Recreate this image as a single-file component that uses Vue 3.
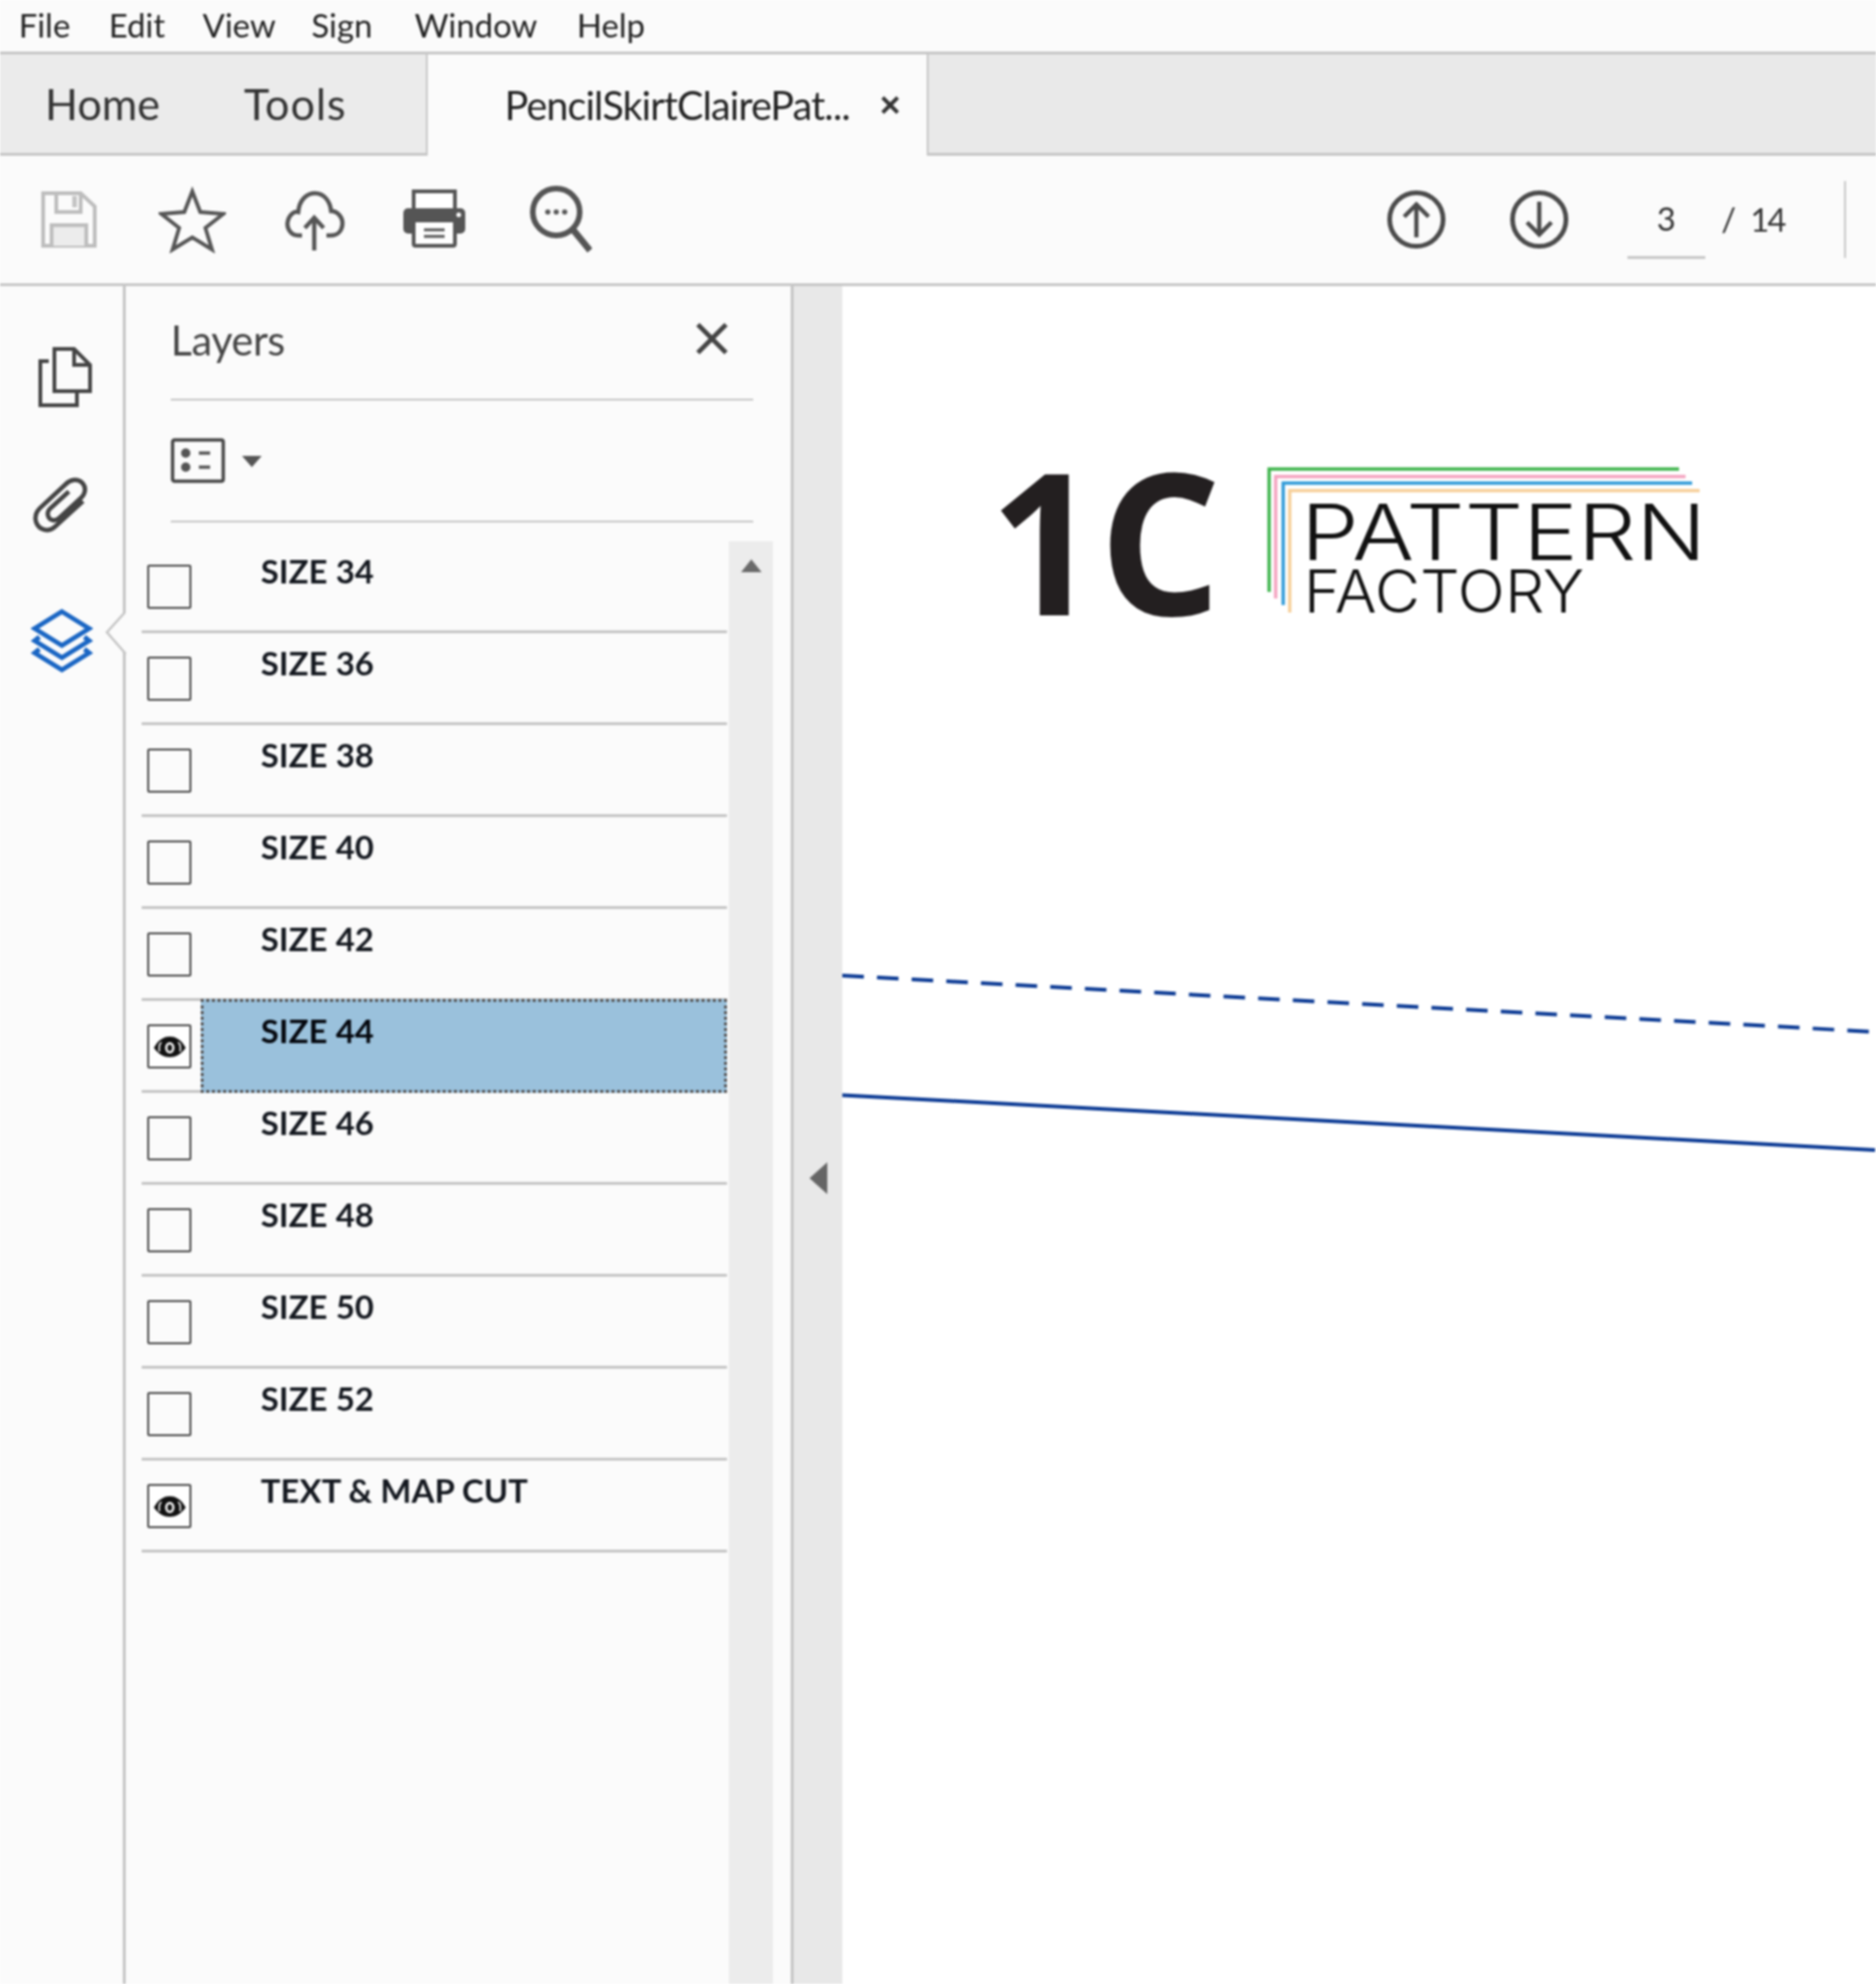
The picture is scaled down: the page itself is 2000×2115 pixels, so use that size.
<script setup>
const menus = [
  { name: 'File', width: 96 },
  { name: 'Edit', width: 100 },
  { name: 'View', width: 116 },
  { name: 'Sign', width: 110 },
  { name: 'Window', width: 173 },
  { name: 'Help', width: 80 }
]
const layers = [
  { name: 'SIZE 34', on: false },
  { name: 'SIZE 36', on: false },
  { name: 'SIZE 38', on: false },
  { name: 'SIZE 40', on: false },
  { name: 'SIZE 42', on: false },
  { name: 'SIZE 44', on: true, selected: true },
  { name: 'SIZE 46', on: false },
  { name: 'SIZE 48', on: false },
  { name: 'SIZE 50', on: false },
  { name: 'SIZE 52', on: false },
  { name: 'TEXT & MAP CUT', on: true }
]
</script>

<template>
  <div class="app">
    <nav class="menu">
      <span v-for="m in menus" :key="m.name" class="menu-item" :style="{ width: m.width + 'px' }">{{ m.name }}</span>
    </nav>

    <div class="tabs">
      <div class="tabs-home">
        <span class="tab-link home">Home</span>
        <span class="tab-link">Tools</span>
      </div>
      <div class="tab-doc">
        <span class="tab-title">PencilSkirtClairePat...</span>
        <svg class="tab-close" viewBox="0 0 20 20"><path d="M2 2 18 18M18 2 2 18" /></svg>
      </div>
      <div class="tabs-rest"></div>
    </div>

    <div class="toolbar">
      <div class="tools-left">
        <svg class="tool" viewBox="3 0 72 72">
          <g fill="none" stroke="#bdbdbd" stroke-width="4">
            <path d="M10 8H50L65 22V64H10Z" />
            <path d="M24 8V28H50V10" />
            <path d="M19 64V42H56V64" fill="#ececec" />
          </g>
          <rect x="41" y="11" width="5" height="12" fill="#c4c4c4" />
        </svg>
        <svg class="tool" viewBox="0 0 72 72">
          <path d="M36 6 44.500 28 69 30 50 45 57 68 36 55 15 68 22 45 3 30 27.500 28Z" fill="none" stroke="#555" stroke-width="4" />
        </svg>
        <svg class="tool" viewBox="0 0 72 72">
          <g fill="none" stroke="#555" stroke-width="4.500">
            <path d="M23 53H19C10 53 6 44 8 37 10 30 15 27 19 28 20 15 28 8 37 8 46 8 53 16 54 27 61 27 67 34 66 42 65 49 60 53 54 53H49" />
            <path d="M36 69V34M26 45 36 34 46 45" />
          </g>
        </svg>
        <svg class="tool" viewBox="0 0 72 72">
          <rect x="12" y="6" width="44" height="24" fill="#fff" stroke="#555" stroke-width="4" />
          <rect x="1" y="24" width="66" height="27" rx="5" fill="#555" />
          <rect x="12" y="37" width="44" height="27" rx="2" fill="#fff" stroke="#555" stroke-width="4" />
          <path d="M23 47H45M23 54H45" stroke="#555" stroke-width="3" />
          <circle cx="60" cy="31" r="2.500" fill="#fff" />
        </svg>
        <svg class="tool" viewBox="0 0 72 72">
          <circle cx="34" cy="28" r="25" fill="none" stroke="#555" stroke-width="6" />
          <path d="M52 47 70 69" stroke="#555" stroke-width="7" />
          <circle cx="25" cy="28" r="2.800" fill="#555" />
          <circle cx="34" cy="28" r="2.800" fill="#555" />
          <circle cx="43" cy="28" r="2.800" fill="#555" />
        </svg>
      </div>
      <div class="tools-right">
        <svg class="nav-btn" viewBox="0 0 62 62">
          <circle cx="31" cy="31" r="28.500" fill="none" stroke="#4a4a4a" stroke-width="5" />
          <path d="M31 50V15M18 28 31 15 44 28" fill="none" stroke="#4a4a4a" stroke-width="4.500" />
        </svg>
        <svg class="nav-btn" viewBox="0 0 62 62">
          <circle cx="31" cy="31" r="28.500" fill="none" stroke="#4a4a4a" stroke-width="5" />
          <path d="M31 12V47M18 34 31 47 44 34" fill="none" stroke="#4a4a4a" stroke-width="4.500" />
        </svg>
        <span class="page-field">3</span>
        <span class="page-total"><span class="slash">/</span>14</span>
        <span class="tool-sep"></span>
      </div>
    </div>

    <div class="body">
      <aside class="rail">
        <svg class="rail-icon pages" viewBox="0 0 64 64">
          <g fill="none" stroke="#444" stroke-width="4">
            <path d="M15 15H6V62H45V48" />
            <path d="M21 47V2H42L59 19V47Z" />
            <path d="M42 2V19H59" />
          </g>
        </svg>
        <svg class="rail-icon clip" viewBox="-2 -2 68 68">
          <path d="M58 26 26 55C18 62 8 58 5 50 3 44 5 38 9 34L38 7C44 1 52 0 57 5 62 10 61 17 56 22L31 45C27 49 21 48 19 44 17 40 18 37 21 34L42 15" fill="none" stroke="#444" stroke-width="5" />
        </svg>
        <svg class="rail-icon stack" viewBox="0 0 66 68">
          <g fill="none" stroke="#1a66c4" stroke-width="5">
            <path d="M33 3 62 21 33 39 4 21Z" />
            <path d="M9 30 4 34 33 52 62 34 57 30" />
            <path d="M9 43 4 47 33 65 62 47 57 43" />
          </g>
        </svg>
        <svg class="notch" viewBox="0 0 26 48">
          <path d="M22 0 2 21 22 44H26V0Z" fill="#fbfbfb" />
          <path d="M21 0 2 21 22 44" fill="none" stroke="#c4c4c4" stroke-width="2.500" />
        </svg>
      </aside>

      <section class="panel">
        <header class="panel-head">
          <h2 class="panel-title">Layers</h2>
          <svg class="panel-close" viewBox="0 0 36 36"><path d="M3 3 33 33M33 3 3 33" /></svg>
        </header>
        <div class="panel-tools">
          <svg class="options" viewBox="0 0 58 48">
            <rect x="2" y="2" width="54" height="44" rx="2" fill="none" stroke="#444" stroke-width="3.500" />
            <circle cx="16" cy="16" r="5" fill="#555" />
            <circle cx="16" cy="31" r="5" fill="#555" />
            <path d="M30 16H42M30 31H42" stroke="#555" stroke-width="3.500" />
          </svg>
          <svg class="caret" viewBox="0 0 21 12"><path d="M0 0H21L10.500 12Z" fill="#555" /></svg>
        </div>
        <div class="list-wrap">
          <ul class="list">
            <li v-for="l in layers" :key="l.name" class="row">
              <div class="row-check">
                <span class="box" :class="{ on: l.on }">
                  <svg v-if="l.on" class="eye" viewBox="0 0 36 24">
                    <path d="M1 13C6 4 12 1 18 1 24 1 30 4 35 13 30 20 24 23 18 23 12 23 6 20 1 13Z" fill="#111" />
                    <path d="M9 7C7 9 6 12 7 17M27 7C29 9 30 12 29 17" stroke="#fff" stroke-width="1.600" fill="none" />
                    <ellipse cx="18" cy="13" rx="5" ry="6" fill="#fff" />
                    <ellipse cx="18" cy="13" rx="2.500" ry="3.500" fill="#111" />
                  </svg>
                </span>
              </div>
              <div class="row-label" :class="{ selected: l.selected }">{{ l.name }}</div>
            </li>
          </ul>
          <div class="scroll">
            <svg class="scroll-up" viewBox="0 0 24 15"><path d="M12 0 24 15H0Z" fill="#6a6a6a" /></svg>
          </div>
        </div>
      </section>

      <div class="splitter">
        <svg class="collapse" viewBox="0 0 19 34"><path d="M19 0V34L0 17Z" fill="#666" /></svg>
      </div>

      <main class="page">
        <svg class="sheet" viewBox="899 304 1101 1811">
          <text class="logo-big" x="1056" y="655" textLength="247" lengthAdjust="spacingAndGlyphs">1C</text>
          <g fill="none" stroke-width="3.500">
            <path d="M1354 630V499H1791" stroke="#3cb44a" />
            <path d="M1361 637V507H1798" stroke="#f4a3c0" />
            <path d="M1369 644V514H1805" stroke="#2f9bd8" />
            <path d="M1376 652V522H1813" stroke="#f7cf98" />
          </g>
          <text class="logo-text" x="1388" y="596" font-size="82" textLength="432" lengthAdjust="spacingAndGlyphs">PATTERN</text>
          <text class="logo-text" x="1391" y="652" font-size="63" textLength="299" lengthAdjust="spacingAndGlyphs">FACTORY</text>
          <path d="M899 1039 2000 1099" stroke="#0b3a94" stroke-width="4" stroke-dasharray="23 14" fill="none" />
          <path d="M899 1166.500 2000 1225" stroke="#0b3a94" stroke-width="4" fill="none" />
        </svg>
      </main>
    </div>
  </div>
</template>

<style>
html, body { margin: 0; background: #fff; }
</style>

<style scoped>
.app {
  width: 2000px;
  height: 2115px;
  display: flex;
  flex-direction: column;
  overflow: hidden;
  background: #fbfbfb;
  color: #2a2a2e;
  font-family: Lato, "Open Sans", sans-serif;
  filter: blur(0.8px);
}

.menu {
  flex: none;
  height: 55px;
  box-sizing: border-box;
  height: 58px;
  padding: 0 0 4px 20px;
  display: flex;
  align-items: center;
  border-bottom: 3px solid #c6c6c6;
  font-size: 35px;
  color: #222;
}
.menu-item { flex: none; }

.tabs { flex: none; height: 108px; display: flex; }
.tabs-home {
  width: 456px;
  box-sizing: border-box;
  display: flex;
  align-items: center;
  padding-left: 48px;
  background: #ebebeb;
  border-bottom: 3px solid #c6c6c6;
  border-right: 2px solid #c6c6c6;
  font-size: 46px;
  color: #333;
}
.tab-link { flex: none; }
.tab-link + .tab-link { letter-spacing: 1px; }
.home { width: 212px; }
.tab-doc {
  width: 534px;
  box-sizing: border-box;
  display: flex;
  align-items: center;
  padding-left: 82px;
  background: #fbfbfb;
  border-right: 2px solid #c6c6c6;
}
.tab-title { font-size: 42px; letter-spacing: -0.9px; color: #222; white-space: nowrap; width: 398px; flex: none; }
.tab-close { width: 20px; height: 20px; flex: none; margin-left: 3px; fill: none; stroke: #333; stroke-width: 4; }
.tabs-rest { flex: 1; background: #e9e9e9; border-bottom: 3px solid #c6c6c6; }

.toolbar {
  flex: none;
  height: 139px;
  box-sizing: border-box;
  display: flex;
  align-items: center;
  justify-content: space-between;
  border-bottom: 3px solid #c6c6c6;
}
.tools-left { display: flex; gap: 58px; padding-left: 39px; }
.tool { width: 72px; height: 72px; display: block; }
.tools-right { display: flex; align-items: center; padding-right: 32px; }
.nav-btn { width: 62px; height: 62px; display: block; margin-right: 69px; }
.nav-btn + .page-field { margin-left: -6px; }
.page-field {
  width: 83px;
  height: 81px;
  box-sizing: border-box;
  margin-top: 3px;
  border-bottom: 3px solid #c6c6c6;
  text-align: center;
  font-size: 35px;
  line-height: 74px;
  color: #333;
}
.page-total {
  width: 148px;
  flex: none;
  box-sizing: border-box;
  padding: 0 0 2px 17px;
  font-size: 35px;
  color: #333;
  letter-spacing: -2px;
}
.slash { display: inline-block; width: 31px; }
.tool-sep { width: 2px; height: 82px; background: #c6c6c6; }

.body { flex: 1; display: flex; min-height: 0; }

.rail {
  position: relative;
  flex: none;
  width: 131px;
  display: flex;
  flex-direction: column;
  border-right: 3px solid #c4c4c4;
}
.rail-icon { display: block; width: 64px; height: 64px; }
.pages { margin: 65px 0 0 37px; }
.clip { margin: 74px 0 0 32px; }
.stack { width: 66px; height: 68px; margin: 77px 0 0 33px; }
.notch {
  position: absolute;
  left: 112px;
  top: 348px;
  width: 26px;
  height: 48px;
}

.panel {
  flex: none;
  width: 712px;
  box-sizing: border-box;
  display: flex;
  flex-direction: column;
  border-right: 3px solid #c4c4c4;
}
.panel-head {
  flex: none;
  height: 122px;
  margin: 0 40px 0 48px;
  box-sizing: border-box;
  display: flex;
  align-items: center;
  justify-content: space-between;
  border-bottom: 2px solid #c6c6c6;
}
.panel-title { margin: 0 0 6px; font-size: 44px; font-weight: 400; color: #444; letter-spacing: -0.4px; }
.panel-close { width: 36px; height: 36px; margin: 0 26px 8px 0; fill: none; stroke: #444; stroke-width: 5; }
.panel-tools {
  flex: none;
  height: 130px;
  margin: 0 40px 0 48px;
  box-sizing: border-box;
  display: flex;
  align-items: center;
  border-bottom: 2px solid #c6c6c6;
}
.options { width: 58px; height: 48px; display: block; }
.caret { width: 21px; height: 12px; margin: 2px 0 0 18px; display: block; }

.list-wrap { flex: 1; display: flex; min-height: 0; margin-top: 20px; }
.list { flex: none; width: 624px; margin: 0 0 0 17px; padding: 0; list-style: none; }
.row { height: 98px; display: flex; }
.row-check {
  flex: none;
  width: 63px;
  box-sizing: border-box;
  padding: 25px 0 0 6px;
  border-bottom: 3px solid #c4c4c4;
}
.box {
  width: 47px;
  height: 47px;
  box-sizing: border-box;
  display: flex;
  align-items: center;
  justify-content: center;
  border: 2.500px solid #444;
  border-radius: 2px;
}
.box.on { background: #fff; }
.eye { width: 36px; height: 24px; display: block; }
.row-label {
  flex: 1;
  box-sizing: border-box;
  padding: 10px 0 0 64px;
  border-bottom: 3px solid #c4c4c4;
  font-size: 35px;
  font-weight: 700;
  letter-spacing: 0.1px;
  line-height: 42px;
  color: #14181f;
  white-space: nowrap;
}
.row-label.selected {
  background: #9ac1dc;
  margin-top: -2px;
  height: 100px;
  box-sizing: border-box;
  padding: 9px 0 0 61px;
  border: 3px dotted #4f4a48;
  color: #05080f;
}

.scroll {
  flex: none;
  width: 47px;
  margin-left: 2px;
  display: flex;
  justify-content: center;
  align-items: flex-start;
  background: #ececec;
}
.scroll-up { width: 22px; height: 14px; margin-top: 19px; display: block; }

.splitter {
  flex: none;
  width: 52px;
  display: flex;
  justify-content: center;
  align-items: flex-start;
  background: #e8e8e8;
}
.collapse { width: 19px; height: 34px; margin-top: 934px; display: block; }

.page { flex: 1; background: #fff; min-width: 0; }
.sheet { width: 1101px; height: 1811px; display: block; }
.logo-big { font-family: "Open Sans", sans-serif; font-weight: 700; font-size: 210px; fill: #231f20; }
.logo-text { font-family: Inter, sans-serif; font-weight: 300; fill: #111; }
</style>
